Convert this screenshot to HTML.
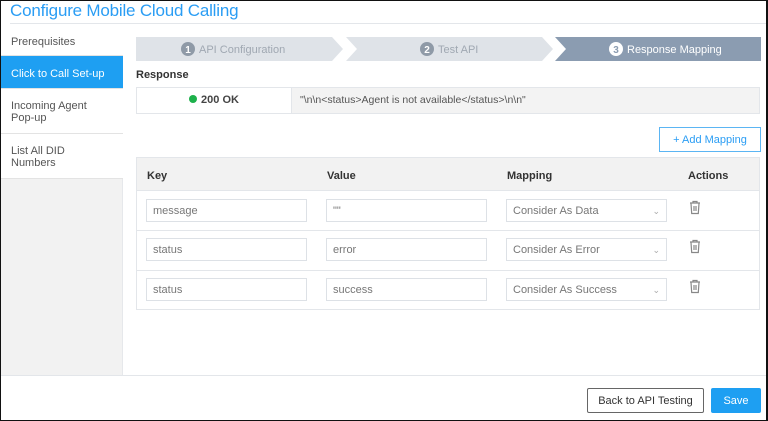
<!DOCTYPE html>
<html><head><style>
*{margin:0;padding:0;box-sizing:border-box}
body{width:768px;height:421px;overflow:hidden;font-family:"Liberation Sans",sans-serif;font-size:11px;color:#333;background:#fff;position:relative}
.frame{position:absolute;left:0;top:0;width:768px;height:421px;border:1px solid #111;border-right-width:2px;pointer-events:none;z-index:10}
.abs{position:absolute}
.title{left:10px;top:1px;font-size:17px;color:#2a9df4;letter-spacing:-0.2px}
.hline{left:10px;top:23px;width:756px;height:1px;background:#e3e6ea}
.side{left:1px;top:24px;width:122px;height:351px;background:#f2f2f2;border-right:1px solid #e6e8eb}
.item{position:absolute;left:0;width:122px;background:#fff;border-bottom:1px solid #e3e3e3;padding:0 0 0 10px;color:#555;font-size:11px;line-height:12px}
.act{background:#1e9ff2;color:#fff}
.inp{position:absolute;height:23px;border:1px solid #dde1e6;background:#fff;color:#777;padding-left:6px;padding-top:5px;line-height:12px;font-size:11px}
.th{position:absolute;top:170px;font-weight:bold;color:#333}
</style></head><body>
<div class="frame"></div>
<div class="abs title">Configure Mobile Cloud Calling</div>
<div class="abs hline"></div>
<div class="abs side">
<div class="item" style="top:0;height:32px;padding-top:12px">Prerequisites</div>
<div class="item act" style="top:32px;height:33px;padding-top:12px">Click to Call Set-up</div>
<div class="item" style="top:65px;height:45px;padding-top:11px">Incoming Agent<br>Pop-up</div>
<div class="item" style="top:110px;height:45px;padding-top:11px">List All DID<br>Numbers</div>
</div>
<svg class="abs" style="left:136px;top:37px" width="625" height="25">
<polygon points="0,0 196,0 207,12 196,24 0,24" fill="#dfe3e8"/>
<polygon points="210,0 406,0 417,12 406,24 210,24 221,12" fill="#dfe3e8"/>
<polygon points="419,0 625,0 625,24 419,24 430,12" fill="#8b9cb1"/>
<circle cx="52" cy="12" r="7" fill="#8f9aa7"/><text x="52" y="16" text-anchor="middle" font-size="10" font-weight="bold" fill="#fff" font-family="Liberation Sans">1</text>
<text x="63" y="16" font-size="11" fill="#a0a8b2" font-family="Liberation Sans">API Configuration</text>
<circle cx="291" cy="12" r="7" fill="#8f9aa7"/><text x="291" y="16" text-anchor="middle" font-size="10" font-weight="bold" fill="#fff" font-family="Liberation Sans">2</text>
<text x="302" y="16" font-size="11" fill="#a0a8b2" font-family="Liberation Sans">Test API</text>
<circle cx="480" cy="12" r="7" fill="#fff"/><text x="480" y="16" text-anchor="middle" font-size="10" font-weight="bold" fill="#8b9cb1" font-family="Liberation Sans">3</text>
<text x="491" y="16" font-size="11" fill="#fff" font-family="Liberation Sans">Response Mapping</text>
</svg>
<div class="abs" style="left:136px;top:69px;font-weight:bold">Response</div>
<div class="abs" style="left:136px;top:87px;width:624px;height:27px;border:1px solid #e3e6ea;background:#f3f3f3"></div>
<div class="abs" style="left:137px;top:88px;width:155px;height:25px;background:#fff;border-right:1px solid #e3e6ea;text-align:center;line-height:25px;font-weight:bold;color:#444"><span style="display:inline-block;width:8px;height:8px;border-radius:50%;background:#1db14b;margin-right:4px"></span>200 OK</div>
<div class="abs" style="left:300px;top:88px;line-height:25px;color:#555;font-size:10.5px">"\n\n&lt;status&gt;Agent is not available&lt;/status&gt;\n\n"</div>
<div class="abs" style="left:659px;top:127px;width:102px;height:25px;border:1px solid #5bb5f3;color:#2a9df4;text-align:center;line-height:25px">+ Add Mapping</div>
<div class="abs" style="left:136px;top:157px;width:624px;height:153px;border:1px solid #e3e6ea"></div>
<div class="abs" style="left:137px;top:158px;width:622px;height:33px;background:#f2f2f2;border-bottom:1px solid #e3e6ea"></div>
<div class="th" style="left:147px">Key</div><div class="th" style="left:327px">Value</div><div class="th" style="left:507px">Mapping</div><div class="th" style="left:688px">Actions</div>
<div class="abs" style="left:137px;top:230px;width:622px;height:1px;background:#e3e6ea"></div>
<div class="abs" style="left:137px;top:270px;width:622px;height:1px;background:#e3e6ea"></div>

<div class="inp" style="left:146px;top:199px;width:161px">message</div>
<div class="inp" style="left:326px;top:199px;width:161px">""</div>
<div class="inp" style="left:506px;top:199px;width:161px">Consider As Data<span style="position:absolute;right:6px;color:#aaa;font-size:9px">&#8964;</span></div>
<div class="inp" style="left:146px;top:238px;width:161px">status</div>
<div class="inp" style="left:326px;top:238px;width:161px">error</div>
<div class="inp" style="left:506px;top:238px;width:161px">Consider As Error<span style="position:absolute;right:6px;color:#aaa;font-size:9px">&#8964;</span></div>
<div class="inp" style="left:146px;top:278px;width:161px">status</div>
<div class="inp" style="left:326px;top:278px;width:161px">success</div>
<div class="inp" style="left:506px;top:278px;width:161px">Consider As Success<span style="position:absolute;right:6px;color:#aaa;font-size:9px">&#8964;</span></div>

<svg class="abs" style="left:688px;top:200px" width="14" height="100" fill="none" stroke="#888" stroke-width="1.2">
<path d="M2 3h10M5 3V1.5h4V3M3 3.5l.7 10h6.6l.7-10M6 6v5M8 6v5"/>
<g transform="translate(0,39)"><path d="M2 3h10M5 3V1.5h4V3M3 3.5l.7 10h6.6l.7-10M6 6v5M8 6v5"/></g>
<g transform="translate(0,79)"><path d="M2 3h10M5 3V1.5h4V3M3 3.5l.7 10h6.6l.7-10M6 6v5M8 6v5"/></g>
</svg>
<div class="abs" style="left:1px;top:375px;width:766px;height:1px;background:#e3e6ea"></div>
<div class="abs" style="left:587px;top:388px;width:117px;height:25px;border:1px solid #666;border-radius:2px;text-align:center;line-height:25px;color:#333">Back to API Testing</div>
<div class="abs" style="left:711px;top:388px;width:50px;height:25px;background:#1e9ff2;border-radius:2px;text-align:center;line-height:27px;color:#fff">Save</div>
</body></html>
